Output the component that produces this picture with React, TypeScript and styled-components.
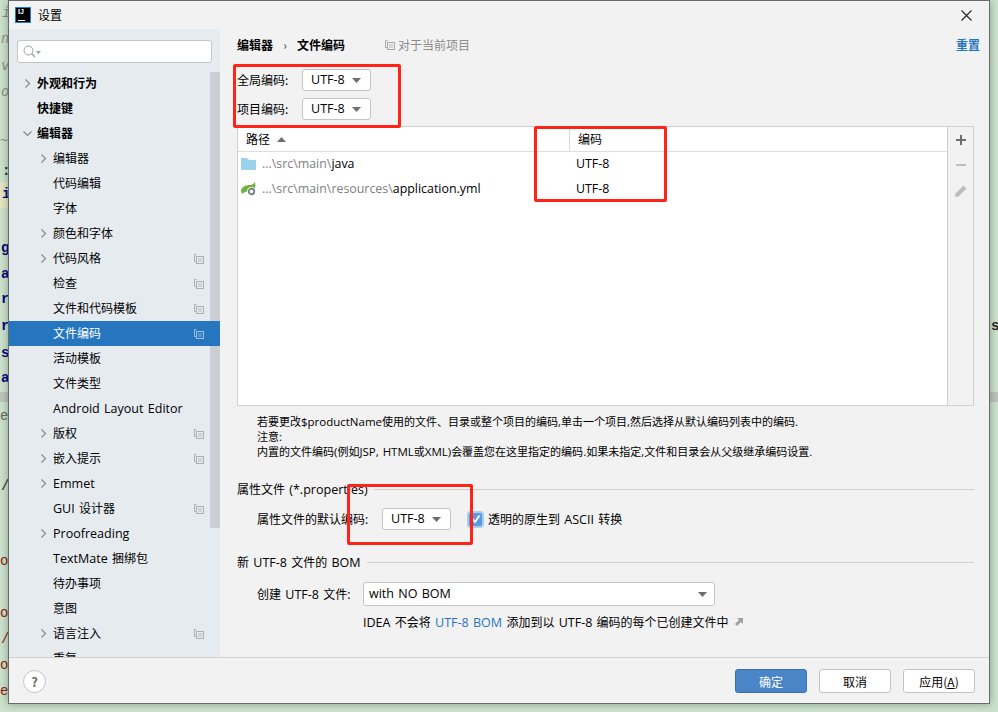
import React from "react";
import styled, { createGlobalStyle } from "styled-components";

const FONT = `"Noto Sans CJK SC", sans-serif`;

const GlobalStyle = createGlobalStyle`
  html, body {
    margin: 0;
    padding: 0;
    background: #cde2cd;
  }
  * {
    box-sizing: border-box;
  }
`;

// What is left visible of the editor behind the dialog
const backdrop = [
  { text: "i", top: 5, left: 2, color: "#8c8c8c", italic: true },
  { text: "n", top: 31, left: 1, color: "#8c8c8c", italic: true },
  { text: "v", top: 58, left: 1, color: "#8c8c8c", italic: true },
  { text: "o", top: 84, left: 1, color: "#8c8c8c", italic: true },
  { text: "~", top: 133, left: 0, color: "#8c8c8c" },
  { text: ":", top: 163, left: 2, color: "#222222", bold: true },
  { text: "i", top: 186, left: 2, color: "#000080", bold: true },
  { text: "g", top: 240, left: 1, color: "#000080", bold: true },
  { text: "a", top: 266, left: 1, color: "#000080", bold: true },
  { text: "r", top: 291, left: 1, color: "#000080", bold: true },
  { text: "r", top: 318, left: 1, color: "#000080", bold: true },
  { text: "s", top: 345, left: 1, color: "#000080", bold: true },
  { text: "a", top: 370, left: 1, color: "#000080", bold: true },
  { text: "e", top: 408, left: 0, color: "#666666" },
  { text: "/", top: 478, left: 1, color: "#222222" },
  { text: "o", top: 553, left: 0, color: "#8a1a10" },
  { text: "o", top: 605, left: 0, color: "#8a1a10" },
  { text: "/", top: 631, left: 1, color: "#8a1a10" },
  { text: "o", top: 657, left: 0, color: "#8a1a10" },
  { text: "e", top: 683, left: 0, color: "#8a1a10" },
  { text: "s", top: 318, left: 991, color: "#222222", bold: true },
];

type TreeItem = {
  label: string;
  level: 0 | 1;
  arrow?: "right" | "down";
  scoped?: boolean;
  selected?: boolean;
};

const tree: TreeItem[] = [
  { label: "外观和行为", level: 0, arrow: "right" },
  { label: "快捷键", level: 0 },
  { label: "编辑器", level: 0, arrow: "down" },
  { label: "编辑器", level: 1, arrow: "right" },
  { label: "代码编辑", level: 1 },
  { label: "字体", level: 1 },
  { label: "颜色和字体", level: 1, arrow: "right" },
  { label: "代码风格", level: 1, arrow: "right", scoped: true },
  { label: "检查", level: 1, scoped: true },
  { label: "文件和代码模板", level: 1, scoped: true },
  { label: "文件编码", level: 1, scoped: true, selected: true },
  { label: "活动模板", level: 1 },
  { label: "文件类型", level: 1 },
  { label: "Android Layout Editor", level: 1 },
  { label: "版权", level: 1, arrow: "right", scoped: true },
  { label: "嵌入提示", level: 1, arrow: "right", scoped: true },
  { label: "Emmet", level: 1, arrow: "right" },
  { label: "GUI 设计器", level: 1, scoped: true },
  { label: "Proofreading", level: 1, arrow: "right" },
  { label: "TextMate 捆绑包", level: 1 },
  { label: "待办事项", level: 1 },
  { label: "意图", level: 1 },
  { label: "语言注入", level: 1, arrow: "right", scoped: true },
  { label: "重复", level: 1 },
];

// Latin runs are a bit bigger than the Chinese ones, like in the IDE's UI font
function mixed(text: string) {
  return text
    .split(/([\x20-\x7e]+)/)
    .filter(Boolean)
    .map((run, i) => (/^[\x20-\x7e]/.test(run) ? <Lat key={i}>{run}</Lat> : <span key={i}>{run}</span>));
}

function ScopeIcon({ color = "#a9b0b6" }: { color?: string }) {
  return (
    <svg width="10" height="10" viewBox="0 0 10 10" fill="none" stroke={color}>
      <path d="M2.5 .5H.5V7.5H2.5" />
      <rect x="2.5" y="2.5" width="7" height="7" />
      <path d="M4 5H8M4 7H8" strokeWidth=".8" />
    </svg>
  );
}

function Arrow({ dir }: { dir: "right" | "down" }) {
  return (
    <svg width="9" height="9" viewBox="0 0 9 9" fill="none" stroke="#858a8e" strokeWidth="1.2">
      <path d={dir === "right" ? "M2.5 .5L6.5 4.5L2.5 8.5" : "M.5 2.5L4.5 6.5L8.5 2.5"} />
    </svg>
  );
}

function Caret() {
  return (
    <svg width="9" height="5" viewBox="0 0 9 5">
      <path d="M0 0H9L4.5 5Z" fill="#6e6e6e" />
    </svg>
  );
}

function Dropdown({ value, wide }: { value: string; wide?: boolean }) {
  return (
    <SelectBox $wide={wide}>
      <Lat>{value}</Lat>
      <Caret />
    </SelectBox>
  );
}

export default function App() {
  return (
    <Desktop>
      <GlobalStyle />
      <HighlightLine />
      <StatusStrip />
      {backdrop.map((b, i) => (
        <BackdropChar key={i} $top={b.top} $left={b.left} $color={b.color} $italic={b.italic} $bold={b.bold}>
          {b.text}
        </BackdropChar>
      ))}

      <Dialog>
        <TitleBar>
          <AppLogo>
            <span>IJ</span>
          </AppLogo>
          <TitleText>设置</TitleText>
          <CloseButton>
            <svg width="11" height="11" viewBox="0 0 11 11" stroke="#222" strokeWidth="1.1">
              <path d="M.5 .5L10.5 10.5M10.5 .5L.5 10.5" />
            </svg>
          </CloseButton>
        </TitleBar>

        <Body>
          <Sidebar>
            <SearchBox>
              <svg width="18" height="14" viewBox="0 0 18 14" fill="none" stroke="#9a9fa3">
                <circle cx="5.5" cy="5.5" r="4.5" />
                <path d="M8.8 8.8L12 12" strokeWidth="1.3" />
                <path d="M13 6H18L15.5 9Z" fill="#9a9fa3" stroke="none" />
              </svg>
            </SearchBox>
            <Tree>
              <ScrollThumb />
              {tree.map((item, i) => (
                <TreeRow key={i} $level={item.level} $selected={item.selected}>
                  <ArrowSlot>{item.arrow && <Arrow dir={item.arrow} />}</ArrowSlot>
                  <TreeLabel $bold={item.level === 0}>{mixed(item.label)}</TreeLabel>
                  {item.scoped && (
                    <ScopeSlot>
                      <ScopeIcon color={item.selected ? "#9dbfe0" : "#a9b0b6"} />
                    </ScopeSlot>
                  )}
                </TreeRow>
              ))}
            </Tree>
          </Sidebar>

          <Main>
            <Breadcrumb>
              <Crumb>编辑器</Crumb>
              <CrumbSep>›</CrumbSep>
              <Crumb>文件编码</Crumb>
              <ProjectHint>
                <ScopeIcon color="#a8a8a8" />
                对于当前项目
              </ProjectHint>
              <ResetLink>重置</ResetLink>
            </Breadcrumb>

            <EncodingRows>
              <EncodingRow>
                <EncodingLabel>全局编码:</EncodingLabel>
                <Dropdown value="UTF-8" />
              </EncodingRow>
              <EncodingRow>
                <EncodingLabel>项目编码:</EncodingLabel>
                <Dropdown value="UTF-8" />
              </EncodingRow>
            </EncodingRows>

            <TablePanel>
              <TableArea>
                <HeaderRow>
                  <PathHead>
                    路径
                    <svg width="9" height="5" viewBox="0 0 9 5">
                      <path d="M0 5H9L4.5 0Z" fill="#6e6e6e" />
                    </svg>
                  </PathHead>
                  <EncodingHead>编码</EncodingHead>
                </HeaderRow>
                <DataRow>
                  <PathCell>
                    <svg width="16" height="12" viewBox="0 0 16 12">
                      <path d="M0 0H6L8 2H15V12H0Z" fill="#9ad2ec" />
                    </svg>
                    <PathText>
                      <Muted>...\src\main\</Muted>java
                    </PathText>
                  </PathCell>
                  <EncodingCell>UTF-8</EncodingCell>
                </DataRow>
                <DataRow>
                  <PathCell>
                    <svg width="16" height="14" viewBox="0 0 16 14">
                      <path d="M0 9C0 5 5 3 9 3C11 3 13 2 14 0C15 4 14 7 11 8L4 10L1 12Z" fill="#6cb33f" />
                      <circle cx="10.5" cy="9.5" r="4.5" fill="#f8f8f8" />
                      <circle cx="10.5" cy="9.5" r="2.8" fill="none" stroke="#6f7b81" strokeWidth="1.7" />
                    </svg>
                    <PathText>
                      <Muted>...\src\main\resources\</Muted>application.yml
                    </PathText>
                  </PathCell>
                  <EncodingCell>UTF-8</EncodingCell>
                </DataRow>
              </TableArea>
              <TableTools>
                <svg width="12" height="12" viewBox="0 0 12 12" fill="#6e6e6e">
                  <path d="M5 1H7V5H11V7H7V11H5V7H1V5H5Z" />
                </svg>
                <svg width="12" height="12" viewBox="0 0 12 12" fill="#bcbcbc">
                  <path d="M1 5H11V7H1Z" />
                </svg>
                <svg width="14" height="14" viewBox="0 0 14 14" fill="#bcbcbc">
                  <path d="M1 13L1.5 9.5L9.5 1.5L12.5 4.5L4.5 12.5Z" />
                </svg>
              </TableTools>
            </TablePanel>

            <HelpNote>
              <NoteLine>{mixed("若要更改$productName使用的文件、目录或整个项目的编码,单击一个项目,然后选择从默认编码列表中的编码.")}</NoteLine>
              <NoteLine>{mixed("注意:")}</NoteLine>
              <NoteLine>{mixed("内置的文件编码(例如JSP, HTML或XML)会覆盖您在这里指定的编码.如果未指定,文件和目录会从父级继承编码设置.")}</NoteLine>
            </HelpNote>

            <SectionTitle $gap={22}>
              <span>{mixed("属性文件 (*.properties)")}</span>
            </SectionTitle>
            <FormRow $gap={11}>
              <FormLabel $width={125}>{mixed("属性文件的默认编码:")}</FormLabel>
              <Dropdown value="UTF-8" />
              <CheckLabel>
                <CheckBox>
                  <svg width="10" height="10" viewBox="0 0 10 10" fill="none" stroke="#fff" strokeWidth="1.8">
                    <path d="M1.5 5L4 8L8.5 1.5" />
                  </svg>
                </CheckBox>
                <span>{mixed("透明的原生到 ASCII 转换")}</span>
              </CheckLabel>
            </FormRow>

            <SectionTitle $gap={24}>
              <span>{mixed("新 UTF-8 文件的 BOM")}</span>
            </SectionTitle>
            <FormRow $gap={12}>
              <FormLabel $width={106}>{mixed("创建 UTF-8 文件:")}</FormLabel>
              <Dropdown value="with NO BOM" wide />
            </FormRow>
            <BomNote>
              <span>
                {mixed("IDEA 不会将 ")}
                <LinkText>UTF-8 BOM</LinkText>
                {mixed(" 添加到以 UTF-8 编码的每个已创建文件中")}
              </span>
              <svg width="8" height="8" viewBox="0 0 8 8" fill="#a0a0a0">
                <path d="M2 0H8V6L6 4L2 8L0 6L4 2Z" />
              </svg>
            </BomNote>
          </Main>
        </Body>

        <Footer>
          <HelpButton>?</HelpButton>
          <FooterActions>
            <ActionButton $primary>确定</ActionButton>
            <ActionButton>取消</ActionButton>
            <ActionButton>
              应用(<u>A</u>)
            </ActionButton>
          </FooterActions>
        </Footer>
      </Dialog>

      <RedMark $left={233} $top={64} $width={168} $height={64} />
      <RedMark $left={534} $top={126} $width={133} $height={76} />
      <RedMark $left={347} $top={484} $width={126} $height={61} />
    </Desktop>
  );
}

const Lat = styled.span`
  font-family: "Open Sans", sans-serif;
  font-size: 1.045em;
  word-spacing: 1px;
`;

const Desktop = styled.div`
  position: relative;
  width: 998px;
  height: 712px;
  overflow: hidden;
  background: #cde2cd;
  font-family: ${FONT};
`;

const HighlightLine = styled.div`
  position: absolute;
  left: 0;
  top: 182px;
  width: 8px;
  height: 26px;
  background: #e6e6c4;
`;

const StatusStrip = styled.div`
  position: absolute;
  left: 0;
  top: 392px;
  width: 998px;
  height: 10px;
  background: #bdc4bd;
`;

const BackdropChar = styled.span<{ $top: number; $left: number; $color: string; $italic?: boolean; $bold?: boolean }>`
  position: absolute;
  top: ${(p) => p.$top}px;
  left: ${(p) => p.$left}px;
  color: ${(p) => p.$color};
  font-family: "Liberation Mono", monospace;
  font-size: 14px;
  line-height: 16px;
  font-style: ${(p) => (p.$italic ? "italic" : "normal")};
  font-weight: ${(p) => (p.$bold ? 700 : 400)};
`;

const Dialog = styled.div`
  position: absolute;
  left: 8px;
  top: 0;
  width: 982px;
  height: 704px;
  display: flex;
  flex-direction: column;
  background: #f2f2f2;
  border: 1px solid #6a6a6a;
  box-shadow: 0 0 8px rgba(40, 70, 40, 0.45);
  color: #000;
  font-size: 12px;
  line-height: 16px;
`;

const TitleBar = styled.header`
  height: 28px;
  flex: none;
  display: flex;
  align-items: center;
  padding: 0 17px 0 6px;
  background: #f2f2f2;
`;

const AppLogo = styled.div`
  width: 16px;
  height: 16px;
  background: #000;
  outline: 1px solid #1f7bd6;
  outline-offset: -1px;
  color: #fff;
  position: relative;

  span {
    display: block;
    padding: 1px 0 0 3px;
    font-family: "Liberation Sans", sans-serif;
    font-size: 7px;
    line-height: 8px;
    font-weight: 700;
  }

  &::after {
    content: "";
    position: absolute;
    left: 3px;
    bottom: 2px;
    width: 7px;
    height: 1px;
    background: #fff;
  }
`;

const TitleText = styled.span`
  margin-left: 7px;
  font-size: 12px;
`;

const CloseButton = styled.div`
  margin-left: auto;
  display: flex;
`;

const Body = styled.div`
  height: 628px;
  flex: none;
  display: flex;
`;

const Sidebar = styled.aside`
  width: 211px;
  flex: none;
  display: flex;
  flex-direction: column;
  background: #e6ebf0;
  overflow: hidden;
`;

const SearchBox = styled.div`
  height: 23px;
  margin: 11px 8px 8px 8px;
  padding: 4px 0 0 5px;
  background: #fff;
  border: 1px solid #c4c7ca;
  border-radius: 3px;
`;

const Tree = styled.div`
  position: relative;
  flex: 1;
  overflow: hidden;
`;

const ScrollThumb = styled.div`
  position: absolute;
  right: 0;
  top: 1px;
  width: 10px;
  height: 456px;
  background: #cbced3;
`;

const TreeRow = styled.div<{ $level: 0 | 1; $selected?: boolean }>`
  position: relative;
  height: 25px;
  display: flex;
  align-items: center;
  padding-left: ${(p) => (p.$level === 0 ? 14 : 30)}px;
  padding-bottom: 1px;
  background: ${(p) => (p.$selected ? "#2675bf" : "transparent")};
  color: ${(p) => (p.$selected ? "#fff" : "#000")};
`;

const ArrowSlot = styled.span`
  width: 14px;
  display: flex;
  align-items: center;
`;

const TreeLabel = styled.span<{ $bold?: boolean }>`
  font-weight: ${(p) => (p.$bold ? 700 : 400)};
  white-space: nowrap;
`;

const ScopeSlot = styled.span`
  position: absolute;
  left: 185px;
  top: 8px;
  display: flex;
`;

const Main = styled.main`
  flex: 1;
  min-width: 0;
  padding: 6px 15px 0 17px;
  display: flex;
  flex-direction: column;
`;

const Breadcrumb = styled.div`
  height: 20px;
  flex: none;
  display: flex;
  align-items: center;
`;

const Crumb = styled.span`
  font-weight: 700;
`;

const CrumbSep = styled.span`
  width: 24px;
  text-align: center;
  color: #444;
`;

const ProjectHint = styled.span`
  margin-left: 40px;
  display: flex;
  align-items: center;
  gap: 3px;
  color: #8c8c8c;
`;

const ResetLink = styled.span`
  margin-left: auto;
  margin-right: -6px;
  color: #2675bf;
  font-weight: 700;
`;

const EncodingRows = styled.div`
  margin-top: 14px;
  display: flex;
  flex-direction: column;
  gap: 7px;
`;

const EncodingRow = styled.div`
  height: 22px;
  display: flex;
  align-items: center;
`;

const EncodingLabel = styled.span`
  width: 65px;
`;

const SelectBox = styled.div<{ $wide?: boolean }>`
  width: ${(p) => (p.$wide ? 352 : 69)}px;
  height: ${(p) => (p.$wide ? 24 : 22)}px;
  flex: none;
  display: flex;
  align-items: center;
  justify-content: space-between;
  padding: ${(p) => (p.$wide ? "0 7px 0 5px" : "0 9px 0 8px")};
  background: #fff;
  border: 1px solid #c4c4c4;
  border-radius: 3px;
`;

const TablePanel = styled.section`
  margin-top: 6px;
  height: 280px;
  flex: none;
  display: flex;
  background: #fff;
  border: 1px solid #d0d0d0;
`;

const TableArea = styled.div`
  flex: 1;
  min-width: 0;
`;

const HeaderRow = styled.div`
  height: 25px;
  display: flex;
  align-items: center;
  border-bottom: 1px solid #dedede;
`;

const PathHead = styled.div`
  width: 332px;
  height: 23px;
  padding-left: 8px;
  display: flex;
  align-items: center;
  gap: 7px;
  border-right: 1px solid #d8d8d8;
`;

const EncodingHead = styled.div`
  padding-left: 8px;
`;

const DataRow = styled.div`
  height: 25px;
  padding-bottom: 2px;
  display: flex;
  align-items: center;
  font-family: "Open Sans", sans-serif;
  font-size: 12.4px;
`;

const PathCell = styled.div`
  width: 332px;
  padding-left: 3px;
  display: flex;
  align-items: center;
  gap: 5px;
`;

const PathText = styled.span`
  white-space: nowrap;
`;

const Muted = styled.span`
  color: #808080;
`;

const EncodingCell = styled.div`
  padding-left: 6px;
`;

const TableTools = styled.div`
  width: 26px;
  flex: none;
  display: flex;
  flex-direction: column;
  align-items: center;
  padding-top: 7px;
  gap: 13px;
  background: #f2f2f2;
  border-left: 1px solid #d0d0d0;
`;

const HelpNote = styled.div`
  margin-top: 8px;
  padding-left: 20px;
  font-size: 11px;
  white-space: nowrap;
`;

const NoteLine = styled.div`
  height: 15px;
  line-height: 15px;
`;

const SectionTitle = styled.div<{ $gap: number }>`
  margin-top: ${(p) => p.$gap}px;
  height: 16px;
  flex: none;
  display: flex;
  align-items: center;
  gap: 6px;

  &::after {
    content: "";
    flex: 1;
    height: 1px;
    background: #d0d0d0;
  }
`;

const FormRow = styled.div<{ $gap: number }>`
  margin-top: ${(p) => p.$gap}px;
  padding-left: 20px;
  display: flex;
  align-items: center;
`;

const FormLabel = styled.span<{ $width: number }>`
  width: ${(p) => p.$width}px;
  white-space: nowrap;
`;

const CheckLabel = styled.label`
  margin-left: 18px;
  display: flex;
  align-items: center;
  gap: 6px;
`;

const CheckBox = styled.span`
  width: 13px;
  height: 13px;
  display: flex;
  align-items: center;
  justify-content: center;
  background: #5a9ae0;
  border-radius: 2px;
  box-shadow: 0 0 0 2px #a9cdee;
`;

const BomNote = styled.div`
  margin-top: 8px;
  padding-left: 126px;
  height: 16px;
  display: flex;
  align-items: center;
  white-space: pre;

  svg {
    margin-left: 6px;
  }
`;

const LinkText = styled(Lat)`
  color: #2675bf;
`;

const Footer = styled.footer`
  flex: 1;
  display: flex;
  align-items: flex-start;
  justify-content: space-between;
  padding: 11px 14px 0 14px;
  border-top: 1px solid #cfcfcf;
`;

const HelpButton = styled.div`
  width: 23px;
  height: 23px;
  margin-top: 1px;
  display: flex;
  align-items: center;
  justify-content: center;
  background: #fff;
  border: 1px solid #c4c4c4;
  border-radius: 50%;
  color: #6e6e6e;
  font-weight: 700;
  font-size: 13px;
`;

const FooterActions = styled.div`
  display: flex;
  gap: 12px;
`;

const ActionButton = styled.div<{ $primary?: boolean }>`
  width: 72px;
  height: 24px;
  padding-top: 1px;
  display: flex;
  align-items: center;
  justify-content: center;
  background: ${(p) => (p.$primary ? "#4a86c7" : "#fff")};
  border: 1px solid ${(p) => (p.$primary ? "#3a70ab" : "#c4c4c4")};
  border-radius: 3px;
  color: ${(p) => (p.$primary ? "#fff" : "#000")};
`;

const RedMark = styled.div<{ $left: number; $top: number; $width: number; $height: number }>`
  position: absolute;
  left: ${(p) => p.$left}px;
  top: ${(p) => p.$top}px;
  width: ${(p) => p.$width}px;
  height: ${(p) => p.$height}px;
  border: 3px solid #ff2318;
  border-radius: 2px;
  pointer-events: none;
`;
